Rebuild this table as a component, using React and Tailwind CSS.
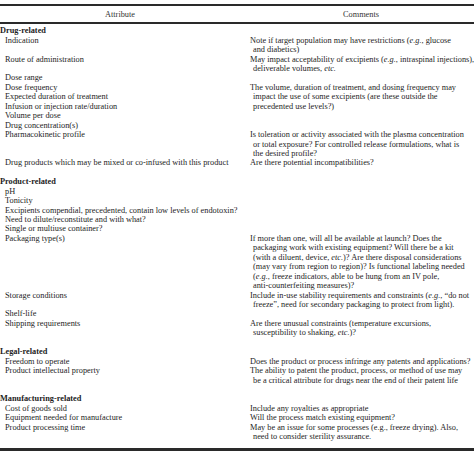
import React from "react";

const Line = ({ children, bold, indent, hang }) => (
  <div
    className={[
      "h-[9.44px] whitespace-nowrap",
      bold ? "font-bold" : "",
      indent ? "pl-[5px]" : "",
      hang ? "pl-[3px]" : "",
    ].join(" ")}
  >
    {children}
  </div>
);

const Blank = ({ n = 1 }) => <div style={{ height: `${9.44 * n}px` }} />;

export default function App() {
  return (
    <div className="w-[474px] h-[451px] overflow-hidden bg-white text-[#1d1d1d] font-['Liberation_Serif',serif] text-[8.3px] leading-[9.44px]">
      <div className="h-[4px]" />
      <div className="h-[1.5px] bg-[#2a2a2a]" />
      <div className="grid grid-cols-[248px_1fr] h-[16.5px] items-center pt-[2.5px] text-[#333]">
        <div className="text-center pr-[8px]">Attribute</div>
        <div className="text-center">Comments</div>
      </div>
      <div className="h-[2px] bg-[#2a2a2a]" />
      <div className="grid grid-cols-[250px_1fr] pt-[2.3px]">
        <div className="flex flex-col">
          <Line bold>Drug-related</Line>
          <Line indent>Indication</Line>
          <Blank />
          <Line indent>Route of administration</Line>
          <Blank />
          <Line indent>Dose range</Line>
          <Line indent>Dose frequency</Line>
          <Line indent>Expected duration of treatment</Line>
          <Line indent>Infusion or injection rate/duration</Line>
          <Line indent>Volume per dose</Line>
          <Line indent>Drug concentration(s)</Line>
          <Line indent>Pharmacokinetic profile</Line>
          <Blank n={2} />
          <Line indent>Drug products which may be mixed or co-infused with this product</Line>
          <Blank />
          <Line bold>Product-related</Line>
          <Line indent>pH</Line>
          <Line indent>Tonicity</Line>
          <Line indent>Excipients compendial, precedented, contain low levels of endotoxin?</Line>
          <Line indent>Need to dilute/reconstitute and with what?</Line>
          <Line indent>Single or multiuse container?</Line>
          <Line indent>Packaging type(s)</Line>
          <Blank n={5} />
          <Line indent>Storage conditions</Line>
          <Blank />
          <Line indent>Shelf-life</Line>
          <Line indent>Shipping requirements</Line>
          <Blank n={2} />
          <Line bold>Legal-related</Line>
          <Line indent>Freedom to operate</Line>
          <Line indent>Product intellectual property</Line>
          <Blank n={2} />
          <Line bold>Manufacturing-related</Line>
          <Line indent>Cost of goods sold</Line>
          <Line indent>Equipment needed for manufacture</Line>
          <Line indent>Product processing time</Line>
        </div>
        <div className="flex flex-col">
          <Blank />
          <Line>Note if target population may have restrictions (<i>e.g.</i>, glucose</Line>
          <Line hang>and diabetics)</Line>
          <Line>May impact acceptability of excipients (<i>e.g.</i>, intraspinal injections),</Line>
          <Line hang>deliverable volumes, <i>etc.</i></Line>
          <Blank />
          <Line>The volume, duration of treatment, and dosing frequency may</Line>
          <Line hang>impact the use of some excipients (are these outside the</Line>
          <Line hang>precedented use levels?)</Line>
          <Blank n={2} />
          <Line>Is toleration or activity associated with the plasma concentration</Line>
          <Line hang>or total exposure? For controlled release formulations, what is</Line>
          <Line hang>the desired profile?</Line>
          <Line>Are there potential incompatibilities?</Line>
          <Blank n={7} />
          <Line>If more than one, will all be available at launch? Does the</Line>
          <Line hang>packaging work with existing equipment? Will there be a kit</Line>
          <Line hang>(with a diluent, device, <i>etc.</i>)? Are there disposal considerations</Line>
          <Line hang>(may vary from region to region)? Is functional labeling needed</Line>
          <Line hang>(<i>e.g.</i>, freeze indicators, able to be hung from an IV pole,</Line>
          <Line hang>anti-counterfeiting measures)?</Line>
          <Line>Include in-use stability requirements and constraints (<i>e.g.</i>, &ldquo;do not</Line>
          <Line hang>freeze&rdquo;, need for secondary packaging to protect from light).</Line>
          <Blank />
          <Line>Are there unusual constraints (temperature excursions,</Line>
          <Line hang>susceptibility to shaking, <i>etc.</i>)?</Line>
          <Blank n={2} />
          <Line>Does the product or process infringe any patents and applications?</Line>
          <Line>The ability to patent the product, process, or method of use may</Line>
          <Line hang>be a critical attribute for drugs near the end of their patent life</Line>
          <Blank n={2} />
          <Line>Include any royalties as appropriate</Line>
          <Line>Will the process match existing equipment?</Line>
          <Line>May be an issue for some processes (e.g., freeze drying). Also,</Line>
          <Line hang>need to consider sterility assurance.</Line>
        </div>
      </div>
      <div className="h-[6px]" />
      <div className="h-[3px] bg-[#2a2a2a]" />
    </div>
  );
}
